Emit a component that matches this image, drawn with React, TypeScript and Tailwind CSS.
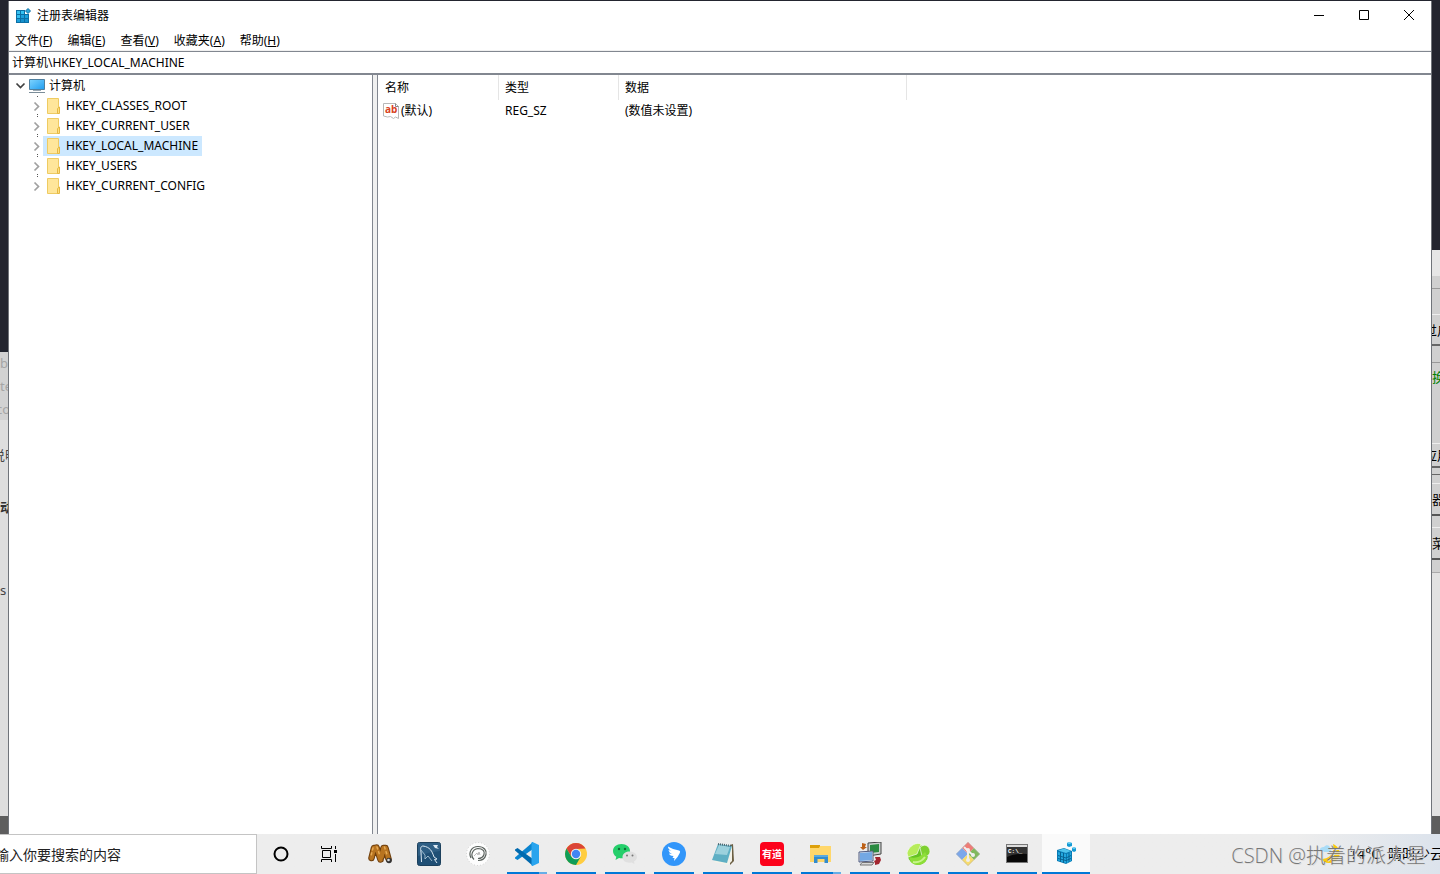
import { useState, type ReactNode } from "react";
import { clsx } from "clsx";

const MENUS = [
  { label: "文件", hotkey: "F" },
  { label: "编辑", hotkey: "E" },
  { label: "查看", hotkey: "V" },
  { label: "收藏夹", hotkey: "A" },
  { label: "帮助", hotkey: "H" },
];

const ROOT_KEYS = [
  "HKEY_CLASSES_ROOT",
  "HKEY_CURRENT_USER",
  "HKEY_LOCAL_MACHINE",
  "HKEY_USERS",
  "HKEY_CURRENT_CONFIG",
];

interface Slice {
  className: string;
  text?: string;
  textClass?: string;
}

// Windows that stick out behind the editor
const LEFT_SLICES: Slice[] = [
  { className: "h-[352px] bg-[#23252f]" },
  { className: "h-[22px] bg-[#d2d2d2]", text: "b", textClass: "text-[#a5a5a5]" },
  { className: "h-[23px] bg-[#d2d2d2]", text: "te", textClass: "text-[#a5a5a5]" },
  { className: "h-[23px] bg-[#d2d2d2]", text: "co", textClass: "-ml-1 text-[#a5a5a5]" },
  { className: "h-[23px] bg-[#dedede]" },
  { className: "h-[23px] bg-[#dedede]", text: "说明", textClass: "-ml-2 text-[#444]" },
  { className: "h-[29px] bg-[#dedede]" },
  { className: "h-[23px] bg-[#dedede]", text: "动", textClass: "font-bold text-[#333]" },
  { className: "h-[60px] bg-[#dedede]" },
  { className: "h-[23px] bg-[#dedede]", text: "s", textClass: "text-[#444]" },
  { className: "flex-1 bg-[#dedede]" },
  { className: "h-[18px] bg-[#5e5e5e]" },
];

const RIGHT_SLICES: Slice[] = [
  { className: "h-[250px] bg-[#23252f]" },
  { className: "h-[26px] bg-[#e6e6e6]" },
  { className: "h-[13px] border-b border-[#999] bg-[#d0d0d0]" },
  { className: "h-[26px] border-b border-[#eee] bg-[#d0d0d0]" },
  { className: "h-[31px] border-b-2 border-[#666] bg-[#d0d0d0]", text: "过户", textClass: "-ml-2 text-black" },
  { className: "h-[17px] border-b border-[#999] bg-[#d0d0d0]" },
  { className: "h-[28px] bg-[#d0d0d0]", text: "换", textClass: "text-[#008000]" },
  { className: "h-[53px] border-b border-[#eee] bg-[#d0d0d0]" },
  { className: "h-[24px] border-b-2 border-[#666] bg-[#d0d0d0]", text: "应用", textClass: "-ml-2 text-black" },
  { className: "h-[7px] border-b border-[#666] bg-[#d0d0d0]" },
  { className: "h-[9px] border-b border-[#eee] bg-[#d0d0d0]" },
  { className: "h-[32px] border-b-2 border-[#555] bg-[#d0d0d0]", text: "器", textClass: "text-black" },
  { className: "h-[12px] border-b border-[#eee] bg-[#d0d0d0]" },
  { className: "h-[32px] border-b-2 border-[#555] bg-[#d0d0d0]", text: "菜", textClass: "text-black" },
  { className: "h-[13px] border-b border-[#aaa] bg-[#d0d0d0]" },
  { className: "flex-1 bg-[#e2e2e2]" },
  { className: "h-[18px] bg-[#5e5e5e]" },
];

function BackdropStrip({ slices }: { slices: Slice[] }) {
  return (
    <div aria-hidden="true" className="flex w-2 shrink-0 flex-col overflow-hidden text-[13px]">
      {slices.map((slice, i) => (
        <div key={i} className={clsx("flex shrink-0 items-center overflow-hidden", slice.className)}>
          {slice.text && <span className={clsx("whitespace-nowrap", slice.textClass)}>{slice.text}</span>}
        </div>
      ))}
    </div>
  );
}

function RegeditIcon() {
  return (
    <svg width="16" height="16" viewBox="0 0 16 16">
      <path d="M1 2h13v13H1z" fill="#0b6fa5" />
      <path d="M10 1h6v5h-6z" fill="#fff" />
      <path d="M2 3h3v3H2zM2 7h3v3H2zM6 3h3v3H6z" fill="#35c1f1" />
      <path d="M6 7h3v3H6zM10 7h3v3h-3zM2 11h3v3H2z" fill="#1ba0dc" />
      <path d="M6 11h3v3H6zM10 11h3v3h-3z" fill="#1590cc" />
      <path d="M13 .500L15.500 3 13 5.500 10.500 3z" fill="#2ba6d8" stroke="#0b6fa5" />
    </svg>
  );
}

function ComputerIcon() {
  return (
    <svg width="16" height="16" viewBox="0 0 16 16">
      <defs>
        <linearGradient id="screen" x1="0" y1="0" x2="1" y2="1">
          <stop offset="0" stopColor="#7fd4ff" />
          <stop offset="1" stopColor="#1e9cf0" />
        </linearGradient>
      </defs>
      <path d="M.5 1.500h15v10H.5z" fill="url(#screen)" stroke="#4f7f9f" />
      <path d="M4 12h8v1H4z" fill="#9aa8b2" />
      <path d="M0 14h16v1H0z" fill="#7b8d99" />
    </svg>
  );
}

function FolderIcon() {
  return (
    <svg width="16" height="16" viewBox="0 0 16 16">
      <path d="M.5.500h11v15H.5z" fill="#ffe69a" stroke="#eecb62" />
      <path d="M10.500 15.500v-5l2-1.500v6.500z" fill="#ffdf80" stroke="#e5b943" />
    </svg>
  );
}

function StringValueIcon() {
  return (
    <svg width="16" height="16" viewBox="0 0 16 16">
      <path d="M.5.500h12l3 3v12l-3-1.500-2 1.500-3-2-3 .5-4-1z" fill="#fff" stroke="#b8b8b8" />
      <path d="M12.500.500v3h3" fill="none" stroke="#888" />
      <text x="2" y="10" fontFamily="Open Sans, sans-serif" fontSize="10" fontWeight="bold" fill="#d8421e">
        ab
      </text>
    </svg>
  );
}

function Expander({ last }: { last: boolean }) {
  return (
    <svg width="11" height="20" viewBox="0 0 11 20" className="shrink-0">
      <path d="M5 0h1v1H5z" fill="#555" />
      {!last && <path d="M5 18h1v1H5z" fill="#555" />}
      <path d="M2.500 6.500l4 4-4 4" fill="none" stroke="#a0a0a0" strokeWidth="1.700" />
    </svg>
  );
}

function TitleBar() {
  return (
    <header className="flex h-[30px] shrink-0 items-start">
      <h1 className="flex h-full flex-1 items-center gap-[6px] pl-[6px]">
        <RegeditIcon />
        注册表编辑器
      </h1>
      <button type="button" aria-label="最小化" className="flex h-7 w-[45px] items-center justify-center hover:bg-gray-200">
        <svg width="10" height="10" stroke="#000" fill="none"><path d="M0 5.500h10" /></svg>
      </button>
      <button type="button" aria-label="最大化" className="flex h-7 w-[45px] items-center justify-center hover:bg-gray-200">
        <svg width="10" height="10" stroke="#000" fill="none"><path d="M.5.500h9v9h-9z" /></svg>
      </button>
      <button type="button" aria-label="关闭" className="flex h-7 w-[45px] items-center justify-center hover:bg-red-500">
        <svg width="10" height="10" stroke="#000" fill="none"><path d="M0 0l10 10M10 0L0 10" /></svg>
      </button>
    </header>
  );
}

function KeyTree({ selected, onSelect }: { selected: string; onSelect: (key: string) => void }) {
  return (
    <nav className="w-[363px] shrink-0 overflow-hidden pt-px">
      <div className="flex h-5 items-center pl-1">
        <svg width="16" height="16" className="shrink-0">
          <path d="M3.500 5.500l4 4 4-4" fill="none" stroke="#404040" strokeWidth="1.700" />
        </svg>
        <button type="button" className="flex items-center gap-1">
          <ComputerIcon />
          计算机
        </button>
      </div>
      <ul>
        {ROOT_KEYS.map((key, i) => (
          <li key={key} className="flex h-5 items-center pl-[23px]">
            <Expander last={i === ROOT_KEYS.length - 1} />
            <button
              type="button"
              onClick={() => onSelect(key)}
              className={clsx("flex h-5 items-center gap-[3px] px-1", selected === key && "bg-[#cce8ff]")}
            >
              <FolderIcon />
              {key}
            </button>
          </li>
        ))}
      </ul>
    </nav>
  );
}

function ValueTable() {
  return (
    <main className="min-w-0 flex-1 pl-px">
      <table className="table-fixed border-separate border-spacing-0 text-left">
        <thead>
          <tr className="h-[25px]">
            <th className="w-[120px] border-r border-[#e5e5e5] pl-[6px] font-normal">名称</th>
            <th className="w-[120px] border-r border-[#e5e5e5] pl-[6px] font-normal">类型</th>
            <th className="w-[288px] border-r border-[#e5e5e5] pl-[6px] font-normal">数据</th>
          </tr>
        </thead>
        <tbody>
          <tr className="h-[22px]">
            <td className="pl-1">
              <span className="flex items-center gap-[2px]">
                <StringValueIcon />
                (默认)
              </span>
            </td>
            <td className="pl-[6px]">REG_SZ</td>
            <td className="pl-[6px]">(数值未设置)</td>
          </tr>
        </tbody>
      </table>
    </main>
  );
}

interface TaskbarApp {
  name: string;
  state: "pinned" | "running" | "stacked" | "active";
  icon: ReactNode;
}

const APPS: TaskbarApp[] = [
  {
    name: "Mybase",
    state: "pinned",
    icon: (
      <>
        <g fill="none" strokeLinecap="round">
          <path d="M3.500 16L6 6M8.500 5.500l4 12M13.500 15l2-9M17.500 6l3 11" stroke="#6d3d0c" strokeWidth="6.500" />
          <path d="M3.500 16L6 6M8.500 5.500l4 12M13.500 15l2-9M17.500 6l3 11" stroke="#b87420" strokeWidth="4.500" />
          <path d="M5 6L3 14M9 5l3 9M16.500 5l3 9" stroke="#e6ab55" strokeWidth="1.500" strokeDasharray="2 3" />
        </g>
        <circle cx="21" cy="18.500" r="2.800" fill="#333" />
        <circle cx="20.500" cy="18" r="1.300" fill="#ddd" />
      </>
    ),
  },
  {
    name: "MySQL Workbench",
    state: "pinned",
    icon: (
      <>
        <rect x=".5" y=".5" width="23" height="23" rx="2" fill="#1f4f75" stroke="#1c405c" />
        <path d="M1 1h22v8Q12 10 1 14z" fill="#3d6e93" opacity=".5" />
        <path d="M4.500 20L4 10C3 6 4 4 6 4c7 1 9 5 11 11l3 2-2.500.5L20 21" fill="none" stroke="#dce9f3" />
        <path d="M4 8l4 5v4l3-3 4 5" fill="none" stroke="#b9d0e0" strokeWidth=".8" />
        <path d="M16 3l2 3 4 1-2-2 1-2" fill="#dce9f3" />
      </>
    ),
  },
  {
    name: "Snipaste",
    state: "pinned",
    icon: (
      <>
        <circle cx="12" cy="12" r="11.500" fill="#fdfdfd" stroke="#bbb" strokeWidth=".6" strokeDasharray="1 2" />
        <path d="M5 16C2 10 6 4.500 12 4.500c6 0 9 4 8 8-1 4-4 6-8 6M8 17.500c-4-4-2-10 4-11 5 0 7 3 6 6-1 3-3 4-6 4" fill="none" stroke="#59605c" strokeWidth="1.200" />
        <path d="M8 14l3-3 1 2 1-3 1 3" fill="none" stroke="#aaa" strokeWidth=".8" />
      </>
    ),
  },
  {
    name: "Visual Studio Code",
    state: "stacked",
    icon: (
      <>
        <path d="M18 0v7L2.500 18 0 16.500v-1z" fill="#0b84cf" />
        <path d="M18 24v-7L2.500 6 0 7.500v1z" fill="#0069ae" />
        <path d="M17.500 0L24 3v18l-6.500 3c-.7 0-1-.5-1-1V1c0-.6.400-1 1-1z" fill="#29a4ee" />
      </>
    ),
  },
  {
    name: "Google Chrome",
    state: "running",
    icon: (
      <>
        <circle cx="12" cy="12" r="11" fill="#ffcd40" />
        <path d="M2.500 6.500A11 11 0 0 1 21.500 6.500L12 7l-4.500 8z" fill="#db4437" />
        <path d="M2.500 6.500A11 11 0 0 0 12 23l4.500-8-4.500 2-4.500-2z" fill="#0f9d58" />
        <circle cx="12" cy="12" r="5.200" fill="#f2f2f2" />
        <circle cx="12" cy="12" r="4.200" fill="#4285f4" />
      </>
    ),
  },
  {
    name: "微信",
    state: "running",
    icon: (
      <>
        <path d="M8.500 2C3.500 2 0 5 0 9c0 2.500 1.200 4.500 3.300 5.800L2.500 18l3.500-2c6 1.500 11-2 11-7 0-4-3.500-7-8.500-7z" fill="#25cf6b" />
        <path d="M16.500 9.500c-4.500 0-7 2.700-7 5.500 0 4 4 6.500 9 5.500l3 1.500-.5-2.500c1.900-1.200 3-2.700 3-4.500 0-3-3-5.500-7.500-5.500z" fill="#e0e0e0" />
        <circle cx="6" cy="7" r="1.200" fill="#136b38" />
        <circle cx="12" cy="7" r="1.200" fill="#136b38" />
        <circle cx="14" cy="13.500" r="1" fill="#777" />
        <circle cx="19.500" cy="13.500" r="1" fill="#777" />
      </>
    ),
  },
  {
    name: "钉钉",
    state: "running",
    icon: (
      <>
        <circle cx="12" cy="12" r="12" fill="#3296fa" />
        <path d="M6 4.500c3 2 7 3 11 4 1.500.5 1.300 1.500.5 3l-2 3.500-3.500 4 .5-3h-2l1-2c-3 0-4-1-4.500-2.500l3 .5C8 11 7 10 6.500 8l3 1C7 7.500 6 6.500 6 4.500z" fill="#fff" />
      </>
    ),
  },
  {
    name: "记事本",
    state: "running",
    icon: (
      <>
        <path d="M19 3l3-1 1 17-4 4z" fill="#6b5f43" />
        <path d="M18 5l3-1 0 15-4 4-14-3z" fill="#f3f2e9" />
        <path d="M7 2l14 2-5 17-15-3z" fill="#5fafc4" />
        <path d="M8 3l11 2-3 8L4 12z" fill="#b7e0e8" opacity=".7" />
        <path d="M7 2l14 2" stroke="#4a6670" strokeWidth="2" strokeDasharray="1 1" />
      </>
    ),
  },
  {
    name: "有道",
    state: "running",
    icon: (
      <>
        <rect width="24" height="24" rx="4" fill="#fc021b" />
        <text x="12" y="16" textAnchor="middle" fontFamily="Noto Sans CJK SC, sans-serif" fontSize="10" fontWeight="bold" fill="#fff">
          有道
        </text>
      </>
    ),
  },
  {
    name: "文件资源管理器",
    state: "stacked",
    icon: (
      <>
        <path d="M1 3h10v4H1z" fill="#dda00a" />
        <path d="M11 4h11v16H1V6h9z" fill="#ffd76b" />
        <path d="M5 13h14v8h-3.500v-4h-7v4H5z" fill="#338ccd" />
        <path d="M5 13h14v2H5z" fill="#5aaae0" />
      </>
    ),
  },
  {
    name: "Xshell",
    state: "running",
    icon: (
      <>
        <path d="M10 1l13-1v12l-13 2z" fill="#ccd1cf" stroke="#444" />
        <path d="M12 3l9-1v8l-9 1z" fill="#2a8a40" />
        <path d="M4 1l4 1-1 3h2l-4 3-3-3h2z" fill="#bd6016" />
        <path d="M1 10l14-1v10l-14 1z" fill="#dce5ef" stroke="#4f5a80" />
        <path d="M2 11l12-1v8L2 19z" fill="#73a8e3" />
        <path d="M2 23h12l2-2.500H4z" fill="#d8d8d8" stroke="#777" />
        <path d="M17 15l5 0 1 3-2 4-4 1v-2l-1-2 2-1z" fill="#a32630" />
      </>
    ),
  },
  {
    name: "Navicat",
    state: "running",
    icon: (
      <>
        <circle cx="11" cy="13" r="10" fill="#65c322" />
        <path d="M0 11C2 3 10 0 14 2L10 12 1 15z" fill="#b7ec5b" stroke="#f4faed" strokeWidth=".7" />
        <path d="M13 6c3-5 10-3 10 4-1 4-4 5-8 4z" fill="#7ed030" stroke="#f4faed" strokeWidth=".7" />
        <path d="M2 15c8 2 12-1 16-5 5 6 0 13-7 13-5 0-8-3-9-8z" fill="#8dde38" />
        <path d="M6 20c5 1 9-1 12-5" fill="none" stroke="#c8f48d" strokeWidth="2" />
      </>
    ),
  },
  {
    name: "Git GUI",
    state: "running",
    icon: (
      <>
        <path d="M12 0l6 6-6 6-6-6z" fill="#f07c76" />
        <path d="M18 6l6 6-6 6-6-6z" fill="#80b95c" />
        <path d="M6 6l6 6-6 6-6-6z" fill="#7ba7eb" />
        <path d="M12 12l6 6-6 6-6-6z" fill="#f8dc6c" />
        <path d="M8 5l4 4v9M12 9l5 4" fill="none" stroke="#eee" strokeWidth="2" />
        <circle cx="12" cy="8" r="2" fill="#eee" />
        <circle cx="12" cy="18" r="2" fill="#eee" />
        <circle cx="17" cy="13" r="2" fill="#eee" />
        <path d="M12 .5L23.500 12 12 23.500.5 12z" fill="none" stroke="#aaa" strokeWidth=".5" />
      </>
    ),
  },
  {
    name: "命令提示符",
    state: "running",
    icon: (
      <>
        <rect x="1" y="2" width="22" height="19" fill="#777" />
        <path d="M2 3h20v2H2z" fill="#ddd" />
        <path d="M2 5h20v15H2z" fill="#080808" />
        <path d="M2 5h20v7Q10 11 2 15z" fill="#333" />
        <text x="3" y="11" fontFamily="Liberation Mono, monospace" fontSize="6" fontWeight="bold" fill="#fff">
          C:\_
        </text>
      </>
    ),
  },
  {
    name: "注册表编辑器",
    state: "active",
    icon: (
      <>
        <path d="M3 8l7-2 8 3v10l-6 3-9-3z" fill="#087ab4" />
        <path d="M4 8.500l6-2 7 2.500-5 2z" fill="#4fc3ec" />
        <path d="M4 10l8 2v9l-8-2.500zM13 12l4-2v9l-4 2z" fill="#23a7de" />
        <path d="M6.500 10v10M9.500 11v10M4 13.500l8 2.500 5-2.500M4 16.500l8 2 5-2M15 11v9" fill="none" stroke="#076393" />
        <path d="M15 0l3 1v3l-3 1-2-1V1zM18 6l2-1 2 1v3l-2 1-2-1z" fill="#159ad4" />
        <path d="M15 0l3 1-3 1-2-1zM18 6l2-1 2 1-2 1z" fill="#74d5f7" />
      </>
    ),
  },
];

function TaskButton({ app }: { app: TaskbarApp }) {
  return (
    <button
      type="button"
      aria-label={app.name}
      className={clsx(
        "flex h-full w-12 flex-col items-center justify-between pt-2",
        app.state === "active" && "bg-[#fafafa]"
      )}
    >
      <svg width="24" height="24" viewBox="0 0 24 24">{app.icon}</svg>
      {app.state !== "pinned" && (
        <span className={clsx("flex h-[2px] bg-[#0078d7]", app.state === "active" ? "w-full" : "w-10")}>
          {app.state === "stacked" && <span className="ml-auto w-2 bg-[#66aee7]" />}
        </span>
      )}
    </button>
  );
}

function Taskbar() {
  return (
    <footer className="relative flex h-10 shrink-0 overflow-hidden bg-linear-to-r from-[#ededed] from-90% to-[#dce3ec]">
      <input
        type="text"
        aria-label="搜索"
        placeholder="输入你要搜索的内容"
        className="-ml-2 w-[265px] shrink-0 border border-[#c4c4c4] bg-white pt-[2px] pl-[2px] text-[14px] outline-none placeholder:text-[#222]"
      />
      <button type="button" aria-label="Cortana" className="flex w-12 shrink-0 items-center justify-center">
        <svg width="16" height="16"><circle cx="8" cy="8" r="6.500" fill="none" stroke="#000" strokeWidth="2" /></svg>
      </button>
      <button type="button" aria-label="任务视图" className="flex w-12 shrink-0 items-center justify-center">
        <svg width="16" height="16" fill="none" stroke="#000">
          <path d="M.5 0v2.500h10V0M.5 16v-2.500h10V16M1.500 4.500h8v7h-8zM14.500 0v3M14.500 8v8" />
          <path d="M13 4h3v3h-3z" fill="#000" stroke="none" />
        </svg>
      </button>
      <div className="ml-[3px] flex shrink-0 gap-px">
        {APPS.map((app) => (
          <TaskButton key={app.name} app={app} />
        ))}
      </div>
      <div className="ml-auto -mr-1 flex shrink-0 items-center gap-2 text-[14px]">
        <svg width="22" height="22" viewBox="0 0 22 22">
          <path d="M14 1c10 4 9 19-4 19-4 0-6-2-8-4 9 0 14-6 12-15z" fill="#fbc90c" />
          <path d="M1 7c0-3 3-3 4-3 2-3 6-2 6 1 2 1 1 4-1 4H3C1 9 1 8 1 7z" fill="#a9dcf7" />
        </svg>
        <span>14°C</span>
        <span>晴时少云</span>
      </div>
      <p className="pointer-events-none absolute right-[14px] top-[6px] whitespace-nowrap font-['Open_Sans','Noto_Sans_CJK_SC',sans-serif] text-[20px] leading-8 font-light text-[#777] [text-shadow:1px_1px_0_#ddd]">
        CSDN @执着的派大星
      </p>
    </footer>
  );
}

export default function App() {
  const [selected, setSelected] = useState("HKEY_LOCAL_MACHINE");

  return (
    <div className="flex h-screen flex-col overflow-hidden bg-[#23252f] font-['Noto_Sans','Noto_Sans_CJK_SC',sans-serif] text-[12px] leading-4 text-black">
      <div className="flex min-h-0 flex-1">
        <BackdropStrip slices={LEFT_SLICES} />
        <section className="mt-px flex min-w-0 flex-1 flex-col border-l border-r border-[#70747a] bg-white">
          <TitleBar />
          <div className="flex h-5 shrink-0 items-center gap-[15px] border-b border-[#f0f0f0] pl-[6px]">
            {MENUS.map((menu) => (
              <button key={menu.hotkey} type="button">
                {menu.label}(<u>{menu.hotkey}</u>)
              </button>
            ))}
          </div>
          <input
            type="text"
            aria-label="地址"
            readOnly
            value={`计算机\\${selected}`}
            className="h-6 shrink-0 border-t border-b-2 border-[#828790] bg-white px-[3px] pb-[2px] outline-none"
          />
          <div className="flex min-h-0 flex-1">
            <KeyTree selected={selected} onSelect={setSelected} />
            <div className="w-[6px] shrink-0 cursor-col-resize border-x border-[#828790] bg-[#f0f0f0]" />
            <ValueTable />
          </div>
        </section>
        <BackdropStrip slices={RIGHT_SLICES} />
      </div>
      <Taskbar />
    </div>
  );
}
